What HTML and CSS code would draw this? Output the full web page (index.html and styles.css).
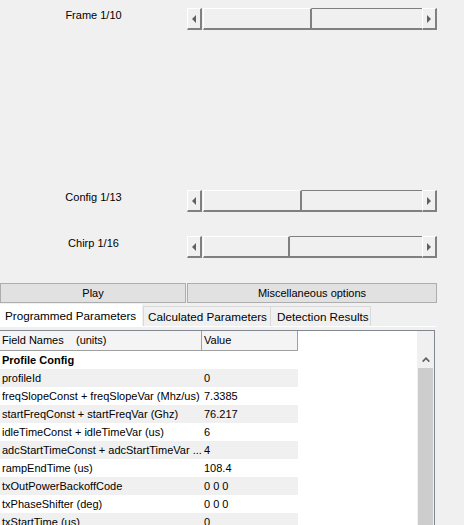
FILE: index.html
```html
<!DOCTYPE html>
<html lang="en">
<head>
    <meta charset="UTF-8">
    <title>Frame Viewer</title>
    <link rel="stylesheet" href="styles.css">
</head>
<body>
    <div class="slider-row frame-row">
        <span class="slider-label">Frame 1/10</span>
        <div class="hscroll">
            <div class="arrow-btn"><span class="tri-left"></span></div>
            <div class="thumb" style="width: 109px"></div>
            <div class="track"></div>
            <div class="arrow-btn"><span class="tri-right"></span></div>
        </div>
    </div>

    <div class="slider-row config-row">
        <span class="slider-label">Config 1/13</span>
        <div class="hscroll">
            <div class="arrow-btn"><span class="tri-left"></span></div>
            <div class="thumb" style="width: 99px"></div>
            <div class="track"></div>
            <div class="arrow-btn"><span class="tri-right"></span></div>
        </div>
    </div>

    <div class="slider-row chirp-row">
        <span class="slider-label">Chirp 1/16</span>
        <div class="hscroll">
            <div class="arrow-btn"><span class="tri-left"></span></div>
            <div class="thumb" style="width: 87px"></div>
            <div class="track"></div>
            <div class="arrow-btn"><span class="tri-right"></span></div>
        </div>
    </div>

    <div class="actions">
        <button class="action-btn play">Play</button>
        <button class="action-btn misc">Miscellaneous options</button>
    </div>

    <div class="tabs">
        <div class="tab active">Programmed Parameters</div>
        <div class="tab calc">Calculated Parameters</div>
        <div class="tab detect">Detection Results</div>
    </div>

    <div class="tab-body">
        <div class="grid-pane">
            <div class="grid">
                <div class="grid-header">
                    <div class="hcell name">Field Names    (units)</div>
                    <div class="hcell value">Value</div>
                </div>
                <div class="grid-row">
                    <div class="cell name bold">Profile Config</div>
                    <div class="cell value"></div>
                </div>
                <div class="grid-row">
                    <div class="cell name">profileId</div>
                    <div class="cell value">0</div>
                </div>
                <div class="grid-row">
                    <div class="cell name">freqSlopeConst + freqSlopeVar (Mhz/us)</div>
                    <div class="cell value">7.3385</div>
                </div>
                <div class="grid-row">
                    <div class="cell name">startFreqConst + startFreqVar (Ghz)</div>
                    <div class="cell value">76.217</div>
                </div>
                <div class="grid-row">
                    <div class="cell name">idleTimeConst + idleTimeVar (us)</div>
                    <div class="cell value">6</div>
                </div>
                <div class="grid-row">
                    <div class="cell name">adcStartTimeConst + adcStartTimeVar ...</div>
                    <div class="cell value">4</div>
                </div>
                <div class="grid-row">
                    <div class="cell name">rampEndTime (us)</div>
                    <div class="cell value">108.4</div>
                </div>
                <div class="grid-row">
                    <div class="cell name">txOutPowerBackoffCode</div>
                    <div class="cell value">0 0 0</div>
                </div>
                <div class="grid-row">
                    <div class="cell name">txPhaseShifter (deg)</div>
                    <div class="cell value">0 0 0</div>
                </div>
                <div class="grid-row">
                    <div class="cell name">txStartTime (us)</div>
                    <div class="cell value">0</div>
                </div>
            </div>
            <div class="grid-fill"></div>
            <div class="vscroll">
                <div class="vscroll-corner"></div>
                <div class="vscroll-up">
                    <svg width="8" height="5" viewBox="0 0 8 5">
                        <path d="M0.7 4.6 L4 1.2 L7.3 4.6" stroke="#606060" stroke-width="1.7" fill="none"/>
                    </svg>
                </div>
                <div class="vscroll-thumb"></div>
            </div>
        </div>
    </div>
</body>
</html>
```

FILE: styles.css
```css
html, body {
    height: 525px;
    overflow: hidden;
}

body {
    margin: 0;
    background-color: #f0f0f0;
    font-family: "Liberation Sans", Arial, sans-serif;
    font-size: 11px;
    color: #000;
}

/* Sliders */
.slider-row {
    display: flex;
    align-items: center;
    height: 22px;
}

.frame-row {
    margin-top: 8px;
}

.config-row {
    margin-top: 160px;
}

.chirp-row {
    margin-top: 24px;
}

.slider-label {
    width: 187px;
    text-align: center;
    padding-bottom: 8px;
    box-sizing: border-box;
}

.hscroll {
    display: flex;
    width: 250px;
    height: 22px;
}

.arrow-btn {
    width: 15px;
    box-sizing: border-box;
    border-top: 1px solid #fff;
    border-left: 1px solid #fff;
    border-right: 2px solid #808080;
    border-bottom: 2px solid #808080;
    display: flex;
    align-items: center;
    justify-content: center;
}

.tri-left {
    width: 0;
    height: 0;
    border-top: 4px solid transparent;
    border-bottom: 4px solid transparent;
    border-right: 4px solid #606060;
}

.tri-right {
    width: 0;
    height: 0;
    border-top: 4px solid transparent;
    border-bottom: 4px solid transparent;
    border-left: 4px solid #606060;
}

.thumb {
    box-sizing: border-box;
    margin-left: 1px;
    border-top: 1px solid #fff;
    border-left: 1px solid #fff;
    border-right: 2px solid #808080;
    border-bottom: 2px solid #808080;
}

.track {
    flex: 1;
    box-sizing: border-box;
    border-top: 1px solid #808080;
    border-bottom: 2px solid #808080;
}

/* Buttons */
.actions {
    display: flex;
    margin-top: 25px;
    height: 20px;
}

.action-btn {
    box-sizing: border-box;
    height: 20px;
    margin: 0;
    padding: 0;
    background-color: #e1e1e1;
    border: 1px solid #adadad;
    font-family: inherit;
    font-size: 11px;
    color: #000;
    text-align: center;
}

.play {
    width: 186px;
}

.misc {
    width: 250px;
    margin-left: 1px;
}

/* Tabs */
.tabs {
    display: flex;
    align-items: flex-start;
    margin-top: 1px;
    height: 22px;
    width: 436px;
    border-bottom: 1px solid #fff;
}

.tab {
    box-sizing: border-box;
    font-size: 11.7px;
    white-space: nowrap;
}

.tab.active {
    width: 142px;
    height: 23px;
    line-height: 23px;
    padding-left: 5px;
    background-color: #fff;
}

.tab.calc,
.tab.detect {
    margin-top: 2px;
    height: 20px;
    line-height: 19px;
    border: 1px solid #d9d9d9;
    border-bottom: none;
    background-color: #f0f0f0;
}

.tab.calc {
    width: 128px;
    margin-left: 1px;
    padding-left: 4px;
}

.tab.detect {
    width: 101px;
    margin-left: -1px;
    padding-left: 6px;
}

/* Parameter table */
.tab-body {
    padding-top: 3px;
}

.grid-pane {
    display: flex;
    width: 435px;
    height: 195px;
    box-sizing: border-box;
    border-top: 1px solid #828790;
    border-right: 1px solid #828790;
    overflow: hidden;
}

.grid {
    width: 298px;
}

.grid-header {
    display: flex;
    height: 20px;
    box-sizing: border-box;
    background-color: #f4f4f4;
    border-bottom: 1px solid #a0a0a0;
}

.hcell {
    box-sizing: border-box;
    padding-left: 2px;
    line-height: 19px;
    border-right: 1px solid #a0a0a0;
    white-space: pre;
}

.hcell.name,
.cell.name {
    width: 202px;
}

.hcell.value {
    width: 96px;
}

.grid-row {
    display: flex;
    height: 18px;
    line-height: 18px;
    background-color: #fff;
}

.grid-row:nth-child(odd) {
    background-color: #f0f0f0;
}

.cell {
    box-sizing: border-box;
    padding-left: 2px;
    white-space: nowrap;
    overflow: hidden;
}

.cell.value {
    flex: 1;
}

.bold {
    font-weight: bold;
}

.grid-fill {
    flex: 1;
    background-color: #fff;
}

.vscroll {
    width: 17px;
    background-color: #f0f0f0;
}

.vscroll-corner {
    height: 19px;
}

.vscroll-up {
    height: 18px;
    display: flex;
    align-items: center;
    justify-content: center;
}

.vscroll-thumb {
    margin-left: 1px;
    width: 15px;
    height: 200px;
    background-color: #cdcdcd;
}
```
